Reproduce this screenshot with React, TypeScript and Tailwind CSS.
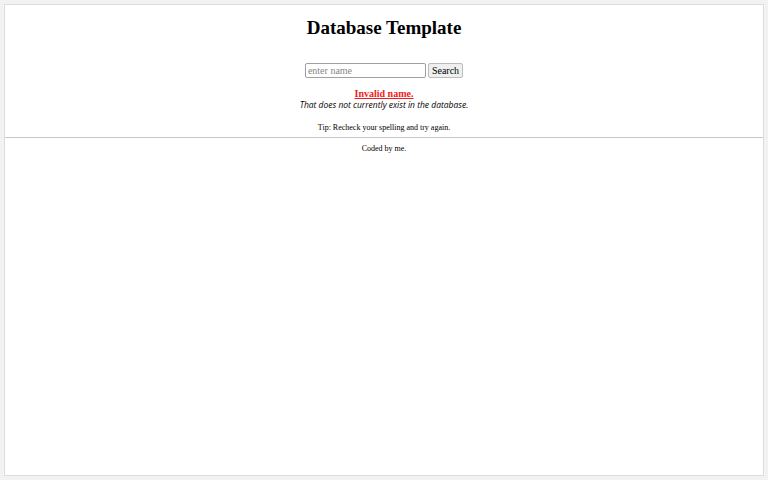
import React, { useState } from "react";

const serif = "font-['Liberation_Serif','Times_New_Roman',serif]";

const App: React.FC = () => {
  const [name, setName] = useState("");

  return (
    <div className={`h-[480px] bg-[#f2f2f2] p-[4px] ${serif}`}>
      <div className="h-full border border-[#dcdcdc] bg-white">
        <h1 className="pt-[11px] text-center text-[19px] leading-[24px] font-bold text-black">
          Database Template
        </h1>

        <div className="mt-[23px] flex justify-center items-center gap-[2px]">
          <input
            value={name}
            onChange={(e) => setName(e.target.value)}
            placeholder="enter name"
            className="h-[15px] w-[121px] border border-[#a0a0a0] rounded-[2px] px-[2px] text-[10px] leading-[13px] placeholder:text-[#888] outline-none"
          />
          <button className="h-[15px] px-[3px] border border-[#bbb] rounded-[2px] bg-[#efefef] text-[10px] leading-[13px] text-black">
            Search
          </button>
        </div>

        <div className="mt-[10px] text-center">
          <p className="text-[10px] leading-[11px] font-bold text-[#ee1c1c] underline">
            Invalid name.
          </p>
          <p className="font-['Open_Sans',sans-serif] italic text-[8.5px] leading-[11px] text-black">
            That does not currently exist in the database.
          </p>
        </div>

        <p className="mt-[13px] text-center text-[8px] leading-[10px] text-black">
          Tip: Recheck your spelling and try again.
        </p>

        <hr className="mt-[4px] border-t border-[#c8c8c8]" />

        <p className="mt-[6px] text-center text-[8px] leading-[10px] text-black">
          Coded by me.
        </p>
      </div>
    </div>
  );
};

export default App;
